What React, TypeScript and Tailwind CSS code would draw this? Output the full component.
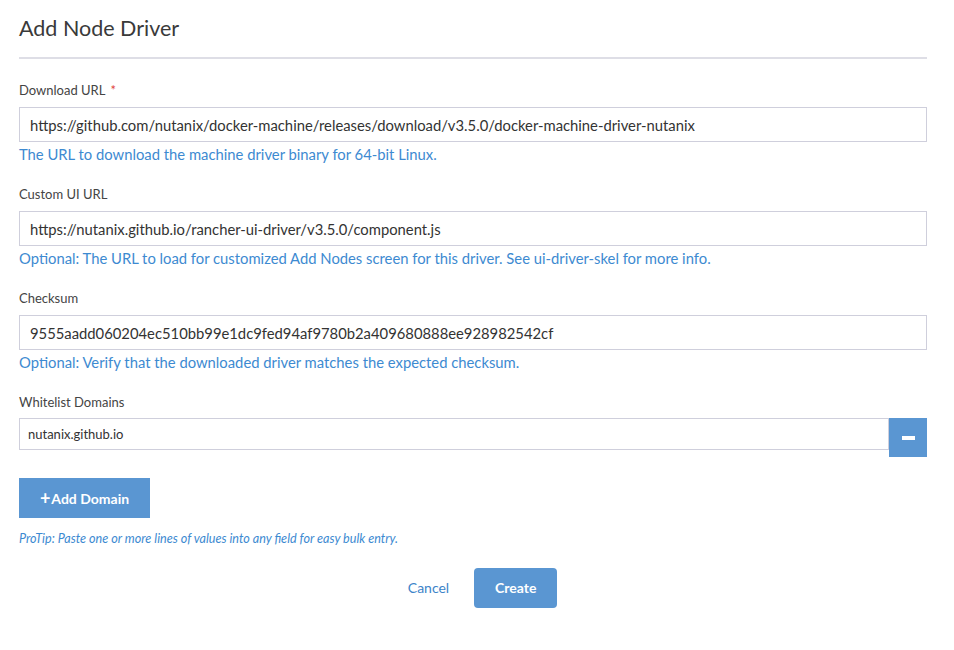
import React from "react";

const font = { fontFamily: "Lato, 'Open Sans', sans-serif" };

function Field({ label, required, value, help }: { label: string; required?: boolean; value: string; help: string }) {
  return (
    <div className="mb-[22px]">
      <label className="block text-[13px] text-[#444] leading-[18px] mb-[8px]">
        {label}
        {required && <span className="text-[#e0453c] ml-[5px]">*</span>}
      </label>
      <input
        readOnly
        value={value}
        className="block w-full h-[35px] border border-[#cfcfdc] px-[10px] text-[14.8px] text-[#333] outline-none bg-white"
        style={font}
      />
      <p className="text-[14.8px] text-[#3d8ad1] leading-[18px] mt-[3px]">{help}</p>
    </div>
  );
}

export default function App() {
  return (
    <div className="w-[954px] h-[650px] bg-white" style={font}>
      <div className="pl-[19px] pr-[27px] pt-[14px]">
        <h1 className="text-[21.5px] text-[#3a3a3a] leading-[28px] pb-[15px] border-b-2 border-[#dedee6]">Add Node Driver</h1>
        <div className="pt-[22px]">
          <Field
            label="Download URL"
            required
            value="https://github.com/nutanix/docker-machine/releases/download/v3.5.0/docker-machine-driver-nutanix"
            help="The URL to download the machine driver binary for 64-bit Linux."
          />
          <Field
            label="Custom UI URL"
            value="https://nutanix.github.io/rancher-ui-driver/v3.5.0/component.js"
            help="Optional: The URL to load for customized Add Nodes screen for this driver. See ui-driver-skel for more info."
          />
          <Field
            label="Checksum"
            value="9555aadd060204ec510bb99e1dc9fed94af9780b2a409680888ee928982542cf"
            help="Optional: Verify that the downloaded driver matches the expected checksum."
          />
          <label className="block text-[13px] text-[#444] leading-[18px] mb-[7px]">Whitelist Domains</label>
          <div className="flex items-start">
            <input
              readOnly
              value="nutanix.github.io"
              className="flex-1 h-[32px] border border-[#cfcfdc] px-[8px] text-[13px] text-[#333] outline-none"
              style={font}
            />
            <button className="w-[38px] h-[39px] bg-[#5a96d2] flex items-center justify-center">
              <span className="block w-[13px] h-[4px] bg-white" />
            </button>
          </div>
          <button className="mt-[21px] w-[131px] h-[40px] bg-[#5a96d2] text-white text-[14px] font-bold flex items-center justify-center">
            <span className="text-[18px] leading-none mr-[1px] font-bold">+</span>Add Domain
          </button>
          <p className="mt-[12px] text-[12.6px] italic text-[#3d8ad1]">ProTip: Paste one or more lines of values into any field for easy bulk entry.</p>
          <div className="flex justify-center items-center mt-[19px] ml-[15px] gap-[21px]">
            <button className="text-[14px] text-[#3d84c9] px-[4px]">Cancel</button>
            <button className="w-[83px] h-[40px] bg-[#5a96d2] text-white text-[14px] font-bold rounded-[4px]">Create</button>
          </div>
        </div>
      </div>
    </div>
  );
}
